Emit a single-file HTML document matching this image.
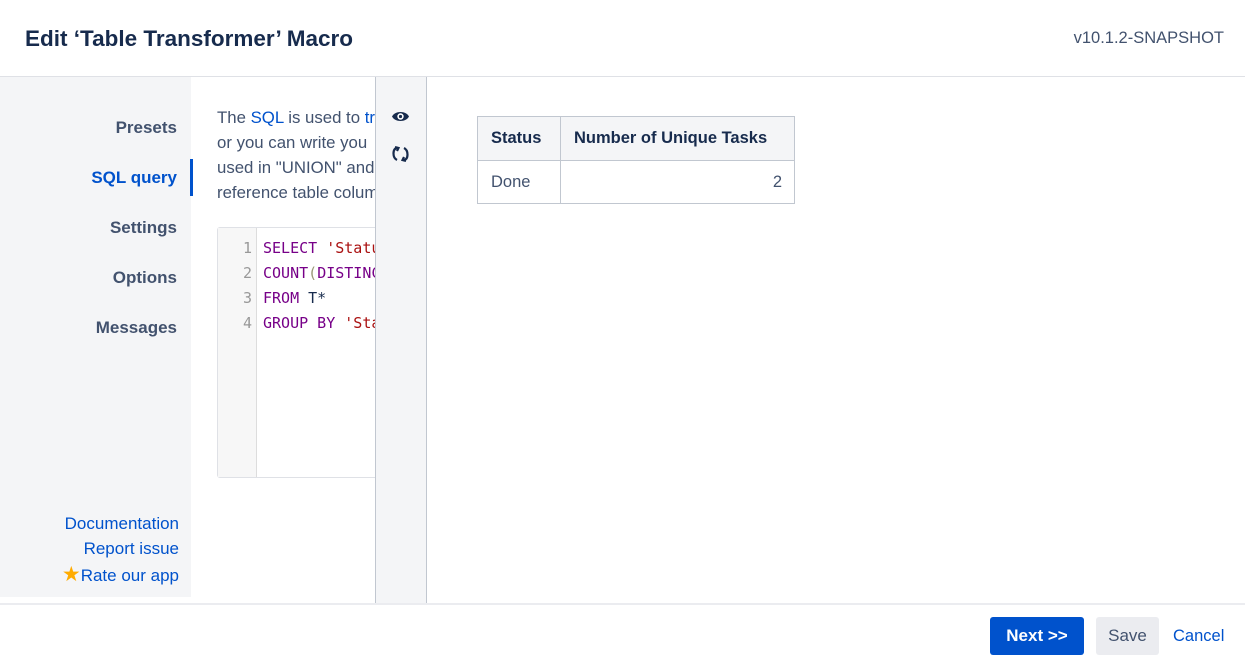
<!DOCTYPE html>
<html><head><style>
*{margin:0;padding:0;box-sizing:border-box}
body{width:1245px;height:663px;position:relative;background:#fff;font-family:"Liberation Sans",sans-serif;color:#172b4d;overflow:hidden}
.a{position:absolute;white-space:nowrap}
.nav{right:1068px;font-size:17px;color:#42526e;text-align:right;font-weight:bold}
.lnk{color:#0052cc}
.code{font-family:"DejaVu Sans Mono","Liberation Mono",monospace;font-size:15px;line-height:25px}
.kw{color:#770088}.st{color:#aa1111}
.num{color:#999;left:217px;width:35px;text-align:right}
</style></head><body>
<div class="a" style="left:25px;top:26px;font-size:22.5px;font-weight:bold;color:#172b4d">Edit ‘Table Transformer’ Macro</div>
<div class="a" style="right:21px;top:29px;font-size:16.5px;color:#42526e">v10.1.2-SNAPSHOT</div>
<div class="a" style="left:0;top:76px;width:1245px;height:1px;background:#dfe1e6"></div>

<div class="a" style="left:0;top:77px;width:191px;height:520px;background:#f4f5f7"></div>
<div class="a nav" style="top:118px">Presets</div>
<div class="a nav" style="top:168px;color:#0052cc">SQL query</div>
<div class="a" style="left:190px;top:159px;width:3px;height:37px;background:#0052cc"></div>
<div class="a nav" style="top:218px">Settings</div>
<div class="a nav" style="top:268px">Options</div>
<div class="a nav" style="top:318px">Messages</div>
<div class="a lnk" style="right:1066px;top:514px;font-size:17px">Documentation</div>
<div class="a lnk" style="right:1066px;top:539px;font-size:17px">Report issue</div>
<div class="a lnk" style="right:1066px;top:562px;font-size:17px"><span style="color:#ffab00;font-size:21px">★</span>Rate our app</div>

<div class="a" style="left:217px;top:105px;font-size:16.8px;line-height:25px;color:#42526e;width:158px;overflow:hidden">The <span class="lnk">SQL</span> is used to <span class="lnk">tr</span><br>or you can write you<br>used in "UNION" and<br>reference table colum</div>

<div class="a" style="left:217px;top:227px;width:170px;height:251px;border:1px solid #dfe1e6;border-radius:3px;background:#fff"></div>
<div class="a" style="left:218px;top:228px;width:39px;height:249px;background:#f7f7f7;border-right:1px solid #ddd"></div>
<div class="a code num" style="top:236px">1<br>2<br>3<br>4</div>
<div class="a code" style="left:263px;top:236px;width:112px;overflow:hidden"><span class="kw">SELECT</span> <span class="st">'Status'</span><br><span class="kw">COUNT</span><span style="color:#997">(</span><span class="kw">DISTINCT</span><br><span class="kw">FROM</span> T*<br><span class="kw">GROUP BY</span> <span class="st">'Status'</span></div>

<div class="a" style="left:375px;top:77px;width:52px;height:526px;background:#f4f5f7;border-left:1px solid #c1c7d0;border-right:1px solid #c1c7d0"></div>
<svg class="a" style="left:391px;top:109px" width="19" height="15" viewBox="0 0 19 15"><path d="M1 7.5C4 1.5 15 1.5 18 7.5C15 13.5 4 13.5 1 7.5Z" fill="#172b4d"/><circle cx="9.5" cy="7.5" r="3.2" fill="#fff"/><circle cx="9.5" cy="7.5" r="1.6" fill="#172b4d"/></svg>
<svg class="a" style="left:391px;top:145px" width="19" height="18" viewBox="0 0 19 18" fill="none" stroke="#172b4d" stroke-width="2.2"><path d="M7 3C4 3 2.5 5 2.5 8.5C2.5 12 4 14 6 15"/><path d="M4 2L7.5 3L6 6" /><path d="M12 15C15 15 16.5 13 16.5 9.5C16.5 6 15 4 13 3"/><path d="M15 16L11.5 15L13 12"/></svg>

<table class="a" style="left:477px;top:116px;border-collapse:collapse;font-size:16.5px">
<tr style="background:#f4f5f7;height:44px"><th style="border:1px solid #c1c7d0;width:83px;text-align:left;padding-left:13px">Status</th><th style="border:1px solid #c1c7d0;width:234px;text-align:left;padding-left:13px">Number of Unique Tasks</th></tr>
<tr style="height:43px"><td style="border:1px solid #c1c7d0;padding-left:13px;color:#42526e">Done</td><td style="border:1px solid #c1c7d0;text-align:right;padding-right:12px;color:#42526e">2</td></tr>
</table>

<div class="a" style="left:0;top:603px;width:1245px;height:2px;background:#ebecf0"></div>
<div class="a" style="left:990px;top:617px;width:94px;height:38px;background:#0052cc;border-radius:3px;color:#fff;font-weight:bold;font-size:17px;text-align:center;line-height:38px">Next &gt;&gt;</div>
<div class="a" style="left:1096px;top:617px;width:63px;height:38px;background:#ebecf0;border-radius:3px;color:#42526e;font-size:17px;text-align:center;line-height:38px">Save</div>
<div class="a lnk" style="left:1173px;top:627px;font-size:16.5px">Cancel</div>
</body></html>
